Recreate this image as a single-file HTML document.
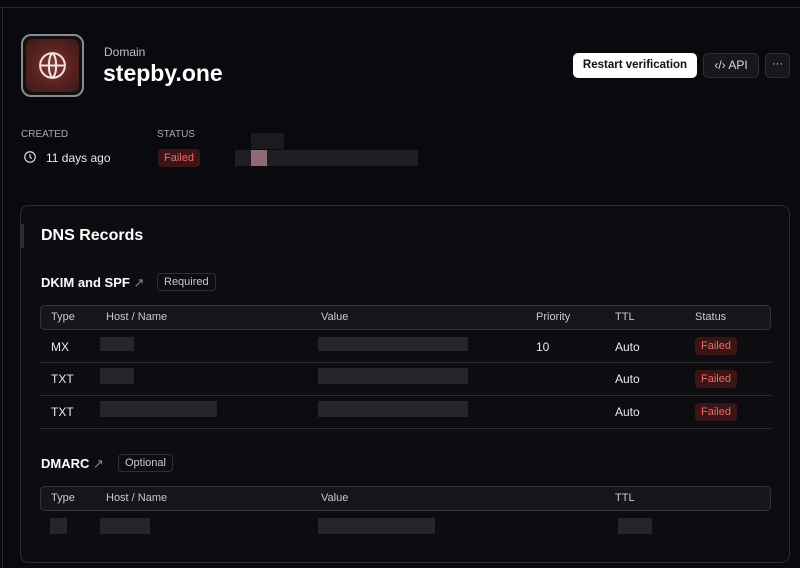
<!DOCTYPE html><html><head><style>
*{margin:0;padding:0;box-sizing:border-box}
body{width:800px;height:568px;background:#0a0a0e;font-family:"Liberation Sans",sans-serif;color:#ececf0;position:relative;overflow:hidden}
.a{position:absolute}
.px{position:absolute;background:#25252b}
.th{position:absolute;font-size:11px;color:#c8c8d0}
.td{position:absolute;font-size:12px;color:#e8e8ee}
.badge{position:absolute;background:#3b1416;color:#f06a6a;font-size:11px;padding:3px 6px;border-radius:4px}
.sep{position:absolute;height:1px;background:#2c2c33}
</style></head><body>
<div class="a" style="left:0;top:7px;width:800px;height:1px;background:#2a2a30"></div>
<div class="a" style="left:2px;top:7px;width:1px;height:561px;background:#2a2a30"></div>
<div class="a" style="left:21px;top:34px;width:63px;height:63px;border:2px solid #8a8a90;border-radius:10px;background:#111"></div>
<div class="a" style="left:26px;top:39px;width:53px;height:53px;border-radius:7px;background:radial-gradient(circle,#8a3a36 0%,#5a2220 50%,#3a1a1a 100%)"></div>
<svg class="a" style="left:36px;top:49px" width="33" height="33" viewBox="0 0 24 24" fill="none" stroke="#f0e0e0" stroke-width="1.5"><circle cx="12" cy="12" r="9"/><path d="M3 12h18M12 3c-3.5 3-3.5 15 0 18M12 3c3.5 3 3.5 15 0 18"/></svg>
<div class="a" style="left:104px;top:45px;font-size:12px;color:#c0c0c8">Domain</div>
<div class="a" style="left:103px;top:60px;font-size:23px;font-weight:bold;color:#fff">stepby.one</div>
<div class="a" style="left:573px;top:53px;width:124px;height:25px;background:#fff;border-radius:5px;color:#111;font-size:11.5px;font-weight:bold;text-align:center;line-height:25px">Restart verification</div>
<div class="a" style="left:703px;top:53px;width:56px;height:25px;background:#18181c;border:1px solid #2e2e34;border-radius:5px;color:#ddd;font-size:12px;text-align:center;line-height:23px">‹/› API</div>
<div class="a" style="left:765px;top:53px;width:25px;height:25px;background:#18181c;border:1px solid #2e2e34;border-radius:5px;color:#ddd;font-size:11px;text-align:center;line-height:20px">···</div>
<div class="a" style="left:21px;top:129px;font-size:10px;color:#a8a8b0">CREATED</div>
<div class="a" style="left:157px;top:129px;font-size:10px;color:#a8a8b0">STATUS</div>
<svg class="a" style="left:23px;top:150px" width="14" height="14" viewBox="0 0 24 24" fill="none" stroke="#ddd" stroke-width="2"><circle cx="12" cy="12" r="9"/><path d="M12 7v5l3 3"/></svg>
<div class="a" style="left:46px;top:151px;font-size:12px">11 days ago</div>
<div class="badge" style="left:158px;top:149px">Failed</div>
<div class="px" style="left:251px;top:133px;width:33px;height:16px;background:#1a1a1f"></div>
<div class="px" style="left:235px;top:150px;width:183px;height:16px;background:#1e1e23"></div>
<div class="px" style="left:251px;top:150px;width:16px;height:16px;background:#8a6c72"></div>
<div class="a" style="left:20px;top:205px;width:770px;height:358px;border:1px solid #2c2c33;border-radius:8px;background:#0d0d11"></div>
<div class="a" style="left:21px;top:224px;width:3px;height:24px;background:#2c2c33"></div>
<div class="a" style="left:41px;top:227px;font-size:16px;font-weight:bold;color:#fff">DNS Records</div>
<div class="a" style="left:41px;top:275px;font-size:13px;font-weight:bold;color:#fff">DKIM and SPF <span style="color:#888;font-weight:normal">↗</span></div>
<div class="a" style="left:157px;top:273px;border:1px solid #2e2e34;border-radius:4px;padding:2px 6px;font-size:11px;color:#ccc">Required</div>
<div class="a" style="left:40px;top:305px;width:731px;height:25px;background:#16161a;border:1px solid #34343a;border-radius:5px"></div>
<div class="th" style="left:51px;top:311px">Type</div><div class="th" style="left:106px;top:311px">Host / Name</div><div class="th" style="left:321px;top:311px">Value</div><div class="th" style="left:536px;top:311px">Priority</div><div class="th" style="left:615px;top:311px">TTL</div><div class="th" style="left:695px;top:311px">Status</div>
<div class="td" style="left:51px;top:340px">MX</div><div class="td" style="left:51px;top:372px">TXT</div><div class="td" style="left:51px;top:405px">TXT</div>
<div class="td" style="left:536px;top:340px">10</div>
<div class="td" style="left:615px;top:340px">Auto</div><div class="td" style="left:615px;top:372px">Auto</div><div class="td" style="left:615px;top:405px">Auto</div>
<div class="badge" style="left:695px;top:337px">Failed</div><div class="badge" style="left:695px;top:370px">Failed</div><div class="badge" style="left:695px;top:403px">Failed</div>
<div class="px" style="left:100px;top:337px;width:34px;height:14px"></div>
<div class="px" style="left:100px;top:368px;width:34px;height:16px"></div>
<div class="px" style="left:100px;top:401px;width:117px;height:16px"></div>
<div class="px" style="left:318px;top:337px;width:150px;height:14px"></div>
<div class="px" style="left:318px;top:368px;width:150px;height:16px"></div>
<div class="px" style="left:318px;top:401px;width:150px;height:16px"></div>
<div class="sep" style="left:40px;top:362px;width:731px"></div>
<div class="sep" style="left:40px;top:395px;width:731px"></div>
<div class="sep" style="left:40px;top:428px;width:731px"></div>
<div class="a" style="left:41px;top:456px;font-size:13px;font-weight:bold;color:#fff">DMARC <span style="color:#888;font-weight:normal">↗</span></div>
<div class="a" style="left:118px;top:454px;border:1px solid #2e2e34;border-radius:4px;padding:2px 6px;font-size:11px;color:#ccc">Optional</div>
<div class="a" style="left:40px;top:486px;width:731px;height:25px;background:#16161a;border:1px solid #34343a;border-radius:5px"></div>
<div class="th" style="left:51px;top:492px">Type</div><div class="th" style="left:106px;top:492px">Host / Name</div><div class="th" style="left:321px;top:492px">Value</div><div class="th" style="left:615px;top:492px">TTL</div>
<div class="px" style="left:50px;top:518px;width:17px;height:16px"></div>
<div class="px" style="left:100px;top:518px;width:50px;height:16px"></div>
<div class="px" style="left:318px;top:518px;width:117px;height:16px"></div>
<div class="px" style="left:618px;top:518px;width:34px;height:16px"></div>
</body></html>
